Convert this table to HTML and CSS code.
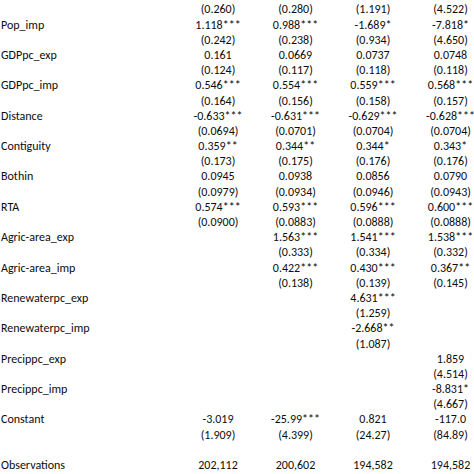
FILE: index.html
```html
<!DOCTYPE html>
<html>
<head>
<meta charset="utf-8">
<link rel="stylesheet" href="styles.css">
</head>
<body>
<div class="table">
  <div class="row cut"><span class="label">Pop_exp</span><span></span><span></span><span></span><span></span></div>
  <div class="row"><span class="label"></span><span>(0.260)</span><span>(0.280)</span><span>(1.191)</span><span>(4.522)</span></div>
  <div class="row"><span class="label">Pop_imp</span><span>1.118***</span><span>0.988***</span><span>-1.689*</span><span>-7.818*</span></div>
  <div class="row"><span class="label"></span><span>(0.242)</span><span>(0.238)</span><span>(0.934)</span><span>(4.650)</span></div>
  <div class="row"><span class="label">GDPpc_exp</span><span>0.161</span><span>0.0669</span><span>0.0737</span><span>0.0748</span></div>
  <div class="row"><span class="label"></span><span>(0.124)</span><span>(0.117)</span><span>(0.118)</span><span>(0.118)</span></div>
  <div class="row"><span class="label">GDPpc_imp</span><span>0.546***</span><span>0.554***</span><span>0.559***</span><span>0.568***</span></div>
  <div class="row"><span class="label"></span><span>(0.164)</span><span>(0.156)</span><span>(0.158)</span><span>(0.157)</span></div>
  <div class="row"><span class="label">Distance</span><span>-0.633***</span><span>-0.631***</span><span>-0.629***</span><span>-0.628***</span></div>
  <div class="row"><span class="label"></span><span>(0.0694)</span><span>(0.0701)</span><span>(0.0704)</span><span>(0.0704)</span></div>
  <div class="row"><span class="label">Contiguity</span><span>0.359**</span><span>0.344**</span><span>0.344*</span><span>0.343*</span></div>
  <div class="row"><span class="label"></span><span>(0.173)</span><span>(0.175)</span><span>(0.176)</span><span>(0.176)</span></div>
  <div class="row"><span class="label">Bothin</span><span>0.0945</span><span>0.0938</span><span>0.0856</span><span>0.0790</span></div>
  <div class="row"><span class="label"></span><span>(0.0979)</span><span>(0.0934)</span><span>(0.0946)</span><span>(0.0943)</span></div>
  <div class="row"><span class="label">RTA</span><span>0.574***</span><span>0.593***</span><span>0.596***</span><span>0.600***</span></div>
  <div class="row"><span class="label"></span><span>(0.0900)</span><span>(0.0883)</span><span>(0.0888)</span><span>(0.0888)</span></div>
  <div class="row"><span class="label">Agric-area_exp</span><span></span><span>1.563***</span><span>1.541***</span><span>1.538***</span></div>
  <div class="row"><span class="label"></span><span></span><span>(0.333)</span><span>(0.334)</span><span>(0.332)</span></div>
  <div class="row"><span class="label">Agric-area_imp</span><span></span><span>0.422***</span><span>0.430***</span><span>0.367**</span></div>
  <div class="row"><span class="label"></span><span></span><span>(0.138)</span><span>(0.139)</span><span>(0.145)</span></div>
  <div class="row"><span class="label">Renewaterpc_exp</span><span></span><span></span><span>4.631***</span><span></span></div>
  <div class="row"><span class="label"></span><span></span><span></span><span>(1.259)</span><span></span></div>
  <div class="row"><span class="label">Renewaterpc_imp</span><span></span><span></span><span>-2.668**</span><span></span></div>
  <div class="row"><span class="label"></span><span></span><span></span><span>(1.087)</span><span></span></div>
  <div class="row"><span class="label">Precippc_exp</span><span></span><span></span><span></span><span>1.859</span></div>
  <div class="row"><span class="label"></span><span></span><span></span><span></span><span>(4.514)</span></div>
  <div class="row"><span class="label">Precippc_imp</span><span></span><span></span><span></span><span>-8.831*</span></div>
  <div class="row"><span class="label"></span><span></span><span></span><span></span><span>(4.667)</span></div>
  <div class="row"><span class="label">Constant</span><span>-3.019</span><span>-25.99***</span><span>0.821</span><span>-117.0</span></div>
  <div class="row"><span class="label"></span><span>(1.909)</span><span>(4.399)</span><span>(24.27)</span><span>(84.89)</span></div>
  <div class="row"><span class="label"></span><span></span><span></span><span></span><span></span></div>
  <div class="row"><span class="label">Observations</span><span>202,112</span><span>200,602</span><span>194,582</span><span>194,582</span></div>
</div>
</body>
</html>
```
FILE: styles.css
```css
html, body {
  margin: 0;
  padding: 0;
  background: #ffffff;
  overflow: hidden;
}
body {
  width: 474px;
  height: 474px;
  font-family: "Carlito", "Lato", "Liberation Sans", sans-serif;
  font-size: 12px;
  color: #0d0d0d;
}
.table {
  margin-top: -12.8px;
  width: 490px;
}
.row {
  display: grid;
  grid-template-columns: 179.25px repeat(4, 77.5px);
  height: 15.2px;
  line-height: 15.2px;
  white-space: nowrap;
}
.row span {
  text-align: center;
}
.row .label {
  text-align: left;
  padding-left: 1px;
}
.cut .label {
  color: #c8c8c8;
}
```
